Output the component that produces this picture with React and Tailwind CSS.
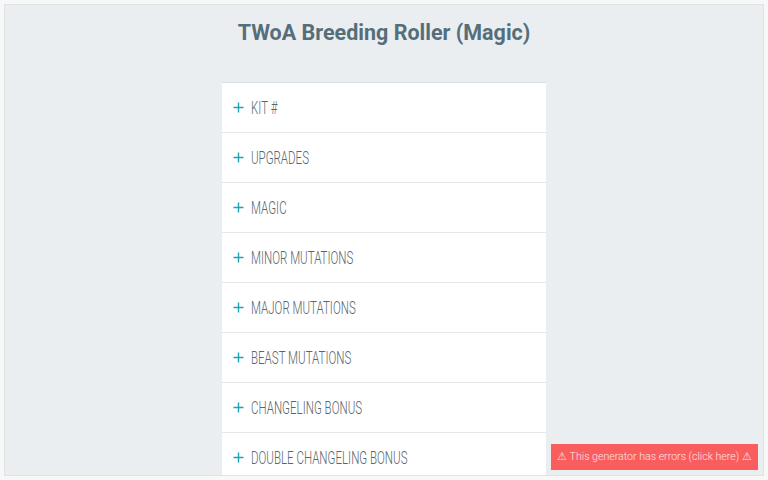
import React from 'react';

const sections = [
  'KIT #',
  'UPGRADES',
  'MAGIC',
  'MINOR MUTATIONS',
  'MAJOR MUTATIONS',
  'BEAST MUTATIONS',
  'CHANGELING BONUS',
  'DOUBLE CHANGELING BONUS',
];

function PlusIcon() {
  return (
    <svg width="11" height="11" viewBox="0 0 11 11" className="shrink-0">
      <path d="M5.5 0.5v10M0.5 5.5h10" stroke="#1fa3b3" strokeWidth="1.4" />
    </svg>
  );
}

export default function App() {
  return (
    <div className="h-[480px] w-[768px] overflow-hidden bg-[#f7f8f8] p-[4px]">
      <div className="h-[472px] w-[760px] overflow-hidden border border-[#dfe3e6] bg-[#eaeef1]">
        <h1 className="pt-[13px] text-center text-[21.5px] font-bold leading-[30px] text-[#566e7a] [font-family:Roboto,sans-serif]">
          TWoA Breeding Roller (Magic)
        </h1>
        <div className="mx-auto mt-[34px] w-[324px] border-t border-[#d9dee2] bg-white">
          {sections.map((s) => (
            <div
              key={s}
              className="flex h-[50px] items-center gap-[7px] border-b border-[#e4e8eb] pl-[11px]"
            >
              <PlusIcon />
              <span className="origin-left scale-x-[0.64] whitespace-nowrap text-[18px] font-light text-[#5a666e] [font-family:Roboto,sans-serif]">
                {s}
              </span>
            </div>
          ))}
        </div>
      </div>
      <div className="fixed left-[551px] top-[444px] flex h-[26px] w-[207px] items-center justify-center whitespace-nowrap bg-[#fa5d5d] text-[10.6px] font-light text-[#ffe4e4] [font-family:Roboto,sans-serif]">
        ⚠ This generator has errors (click here) ⚠
      </div>
    </div>
  );
}
